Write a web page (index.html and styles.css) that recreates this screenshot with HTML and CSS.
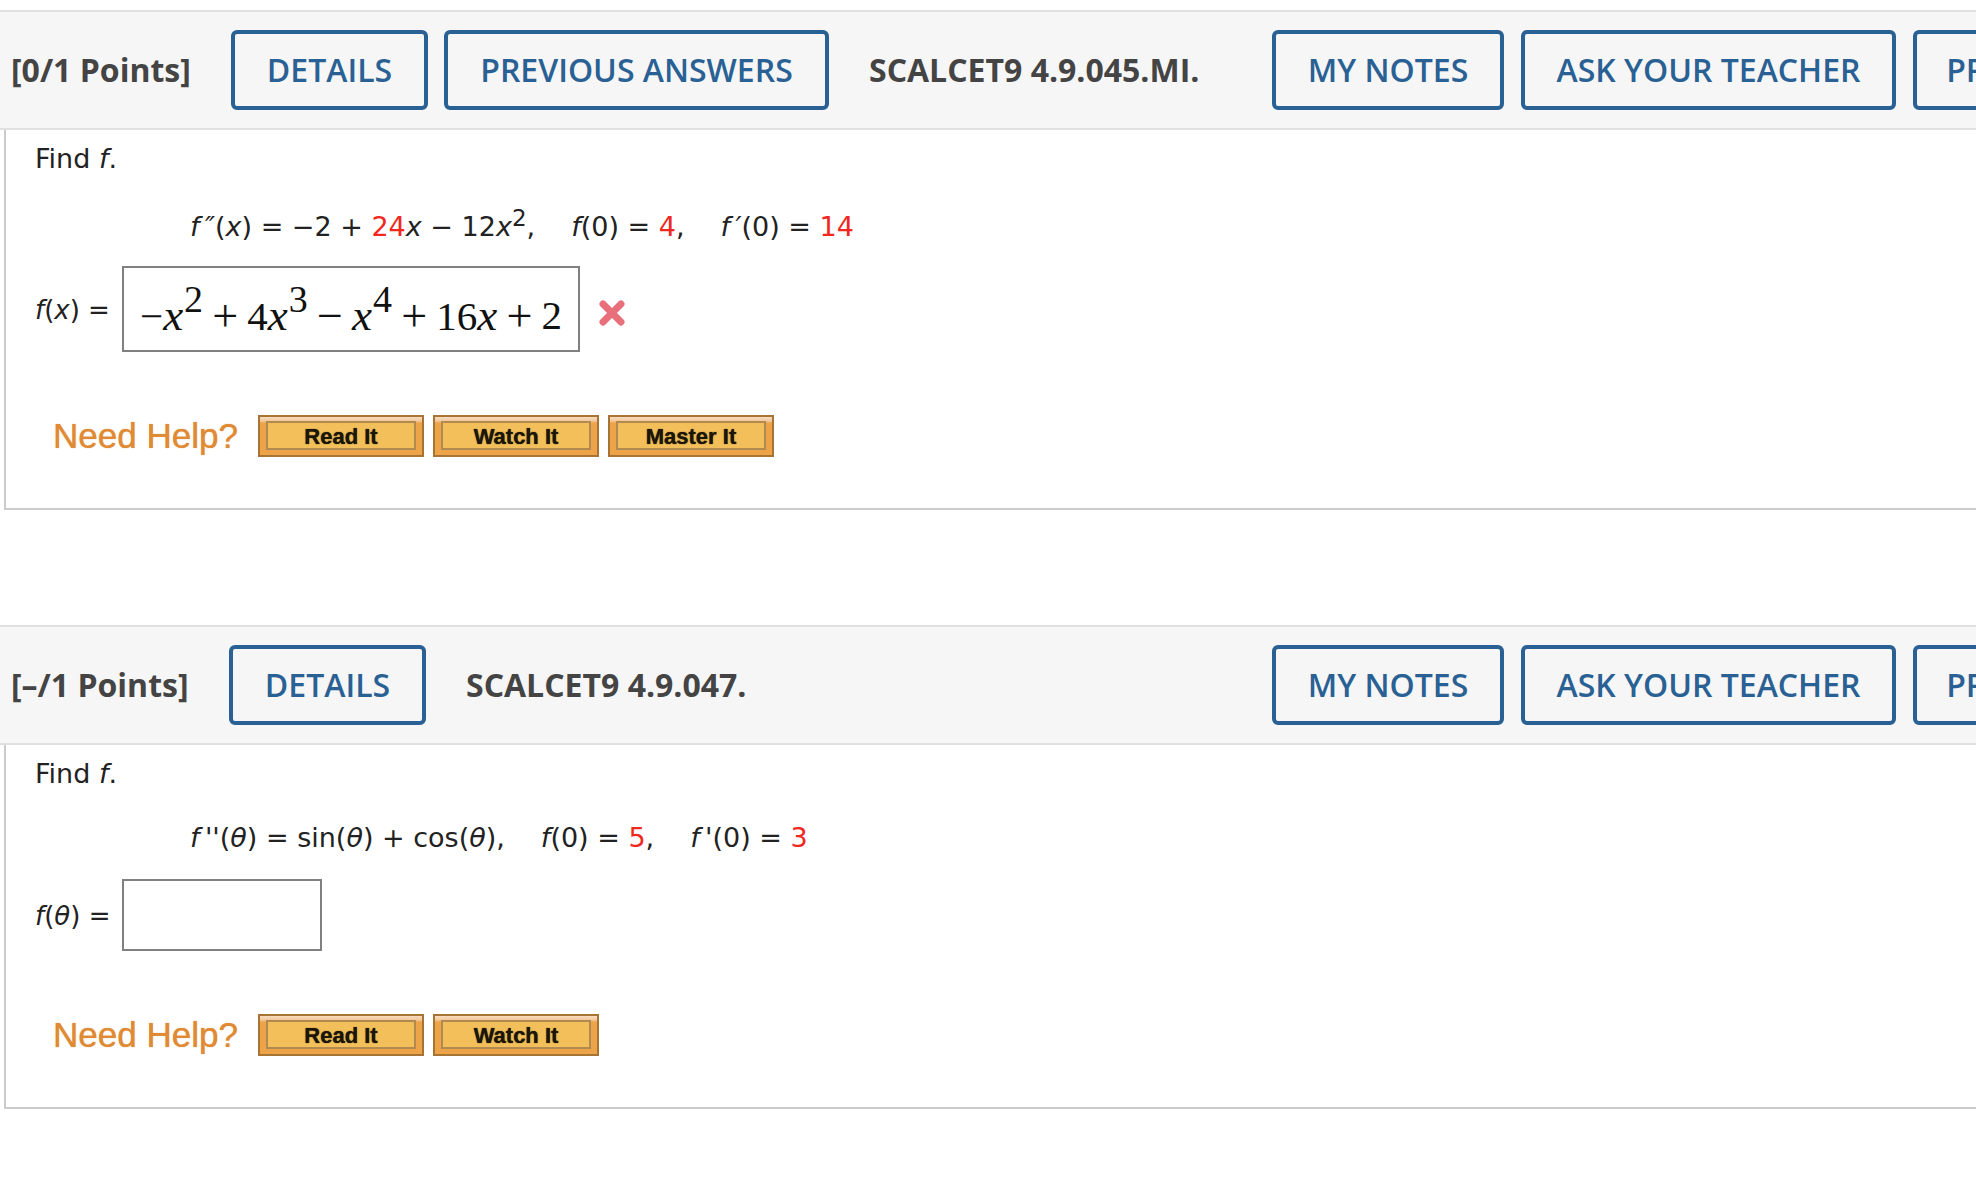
FILE: index.html
```html
<!DOCTYPE html>
<html lang="en">
<head>
    <meta charset="UTF-8">
    <meta name="viewport" content="width=device-width, initial-scale=1.0">
    <title>SCALCET9 4.9</title>
    <link rel="stylesheet" href="styles.css">
</head>
<body>
    <div class="question first">
        <div class="q-header">
            <div class="q-main">
                <span class="points">[0/1 Points]</span>
                <a class="btn btn-details">DETAILS</a>
                <a class="btn btn-prev">PREVIOUS ANSWERS</a>
                <span class="q-code code-a">SCALCET9 4.9.045.MI.</span>
            </div>
            <div class="q-actions">
                <a class="btn btn-notes">MY NOTES</a>
                <a class="btn btn-ask">ASK YOUR TEACHER</a>
                <a class="btn btn-practice">PRACTICE ANOTHER</a>
            </div>
        </div>
        <div class="q-body">
            <p class="find">Find <i>f</i>.</p>
            <p class="equation"><i>f&thinsp;&#8243;</i>(<i>x</i>) = &minus;2 + <span class="red">24</span><i>x</i> &minus; 12<i>x</i><sup>2</sup>,<span class="sep"></span><i>f</i>(0) = <span class="red">4</span>,<span class="sep"></span><i>f&thinsp;&#8242;</i>(0) = <span class="red">14</span></p>
            <div class="answer answer-a">
                <span class="answer-label"><i>f</i>(<i>x</i>) =</span>
                <div class="math-box">
                    <span>&minus;<i>x</i><sup>2</sup></span><span class="op">+</span><span>4<i>x</i><sup>3</sup></span><span class="op">&minus;</span><span><i>x</i><sup>4</sup></span><span class="op">+</span><span>16<i>x</i></span><span class="op">+</span><span>2</span>
                </div>
                <svg class="wrong" width="30" height="30" viewBox="0 0 30 30">
                    <path d="M6 6 L24 24 M24 6 L6 24" fill="none" stroke="#e8707a" stroke-width="7" stroke-linecap="round"/>
                </svg>
            </div>
            <div class="help">
                <span class="help-label">Need Help?</span>
                <a class="help-btn"><span>Read It</span></a>
                <a class="help-btn"><span>Watch It</span></a>
                <a class="help-btn"><span>Master It</span></a>
            </div>
        </div>
    </div>

    <div class="question second">
        <div class="q-header">
            <div class="q-main">
                <span class="points">[&ndash;/1 Points]</span>
                <a class="btn btn-details">DETAILS</a>
                <span class="q-code code-b">SCALCET9 4.9.047.</span>
            </div>
            <div class="q-actions">
                <a class="btn btn-notes">MY NOTES</a>
                <a class="btn btn-ask">ASK YOUR TEACHER</a>
                <a class="btn btn-practice">PRACTICE ANOTHER</a>
            </div>
        </div>
        <div class="q-body">
            <p class="find">Find <i>f</i>.</p>
            <p class="equation"><i>f&thinsp;''</i>(<i>&theta;</i>) = sin(<i>&theta;</i>) + cos(<i>&theta;</i>),<span class="sep"></span><i>f</i>(0) = <span class="red">5</span>,<span class="sep"></span><i>f&thinsp;'</i>(0) = <span class="red">3</span></p>
            <div class="answer answer-b">
                <span class="answer-label"><i>f</i>(<i>&theta;</i>) =</span>
                <div class="empty-box"></div>
            </div>
            <div class="help">
                <span class="help-label">Need Help?</span>
                <a class="help-btn"><span>Read It</span></a>
                <a class="help-btn"><span>Watch It</span></a>
            </div>
        </div>
    </div>
</body>
</html>
```

FILE: styles.css
```css
html, body {
    margin: 0;
    padding: 0;
    background: #fff;
    overflow: hidden;
}
body {
    width: 1976px;
    height: 1198px;
    padding-top: 10px;
    box-sizing: border-box;
    font-family: "DejaVu Sans", sans-serif;
    color: #222;
}
p {
    margin: 0;
}
.second {
    margin-top: 115px;
}
.q-header {
    display: flex;
    height: 116px;
    align-items: center;
    background-color: #f6f6f6;
    border-top: 2px solid #e0e0e0;
    border-bottom: 2px solid #e0e0e0;
    white-space: nowrap;
    font-family: "Open Sans", sans-serif;
    font-size: 32px;
}
.q-main {
    display: flex;
    flex: none;
    width: 1272px;
    align-items: center;
}
.q-actions {
    display: flex;
    flex: none;
    gap: 17px;
}
.points {
    width: 231px;
    padding-left: 11px;
    padding-bottom: 2px;
    box-sizing: border-box;
    font-weight: 700;
    color: #444;
}
.second .points {
    width: 229px;
}
.q-code {
    padding-bottom: 2px;
    font-weight: 700;
    color: #444;
}
.code-a {
    margin-left: 40px;
}
.code-b {
    margin-left: 40px;
}
.btn {
    display: flex;
    height: 80px;
    box-sizing: border-box;
    align-items: center;
    justify-content: center;
    padding-bottom: 2px;
    border: 4px solid #2a6194;
    border-radius: 6px;
    color: #2a6194;
    font-weight: 600;
}
.btn-details {
    width: 197px;
}
.btn-prev {
    width: 385px;
    margin-left: 16px;
}
.btn-notes {
    width: 232px;
}
.btn-ask {
    width: 375px;
}
.btn-practice {
    width: 374px;
}
.q-body {
    border-left: 2px solid #ccc;
    border-bottom: 2px solid #ccc;
    margin-left: 4px;
    padding-left: 29px;
}
.first .q-body {
    height: 378px;
}
.second .q-body {
    height: 362px;
}
.find {
    padding-top: 12px;
    font-size: 27px;
    line-height: 34px;
}
.equation {
    margin-top: 34px;
    padding-left: 155px;
    font-size: 27px;
    line-height: 34px;
}
.second .equation {
    margin-top: 30px;
}
.equation sup {
    font-size: 23px;
    line-height: 0;
}
.sep {
    display: inline-block;
    width: 36px;
}
.red {
    color: #f0281e;
}
.answer {
    display: flex;
    align-items: center;
}
.answer-a {
    margin-top: 22px;
    height: 86px;
}
.answer-b {
    margin-top: 24px;
    height: 72px;
}
.answer-label {
    width: 87px;
    padding-top: 2px;
    font-size: 26px;
}
.math-box {
    display: flex;
    width: 458px;
    height: 86px;
    box-sizing: border-box;
    align-items: center;
    justify-content: space-between;
    padding: 12px 16px 0;
    border: 2px solid #808080;
    font-family: "Liberation Serif", serif;
    font-size: 41px;
    color: #111;
}
.math-box i {
    font-size: 45px;
}
.math-box sup {
    margin-left: 1px;
    font-size: 38px;
    line-height: 0;
    vertical-align: 18px;
}
.math-box .op {
    font-size: 46px;
}
.empty-box {
    width: 200px;
    height: 72px;
    box-sizing: border-box;
    border: 2px solid #808080;
}
.wrong {
    margin-top: 8px;
    margin-left: 17px;
}
.help {
    display: flex;
    align-items: center;
    gap: 9px;
    margin-top: 63px;
    padding-left: 18px;
}
.help-label {
    width: 196px;
    font-family: "Liberation Sans", sans-serif;
    font-size: 35px;
    color: #e08a35;
    text-shadow: 0 0 1px #e08a35;
}
.help-btn {
    display: block;
    width: 166px;
    height: 42px;
    box-sizing: border-box;
    padding: 4px 6px 5px;
    background: linear-gradient(#f7dcc0 0, #f3c89a 4px, #eda348 6px);
    border: 2px solid #a87434;
}
.help-btn span {
    display: block;
    height: 100%;
    box-sizing: border-box;
    border: 2px solid #b08a50;
    background-color: #f2bf5a;
    text-align: center;
    font-family: "Liberation Sans", sans-serif;
    font-size: 22px;
    font-weight: bold;
    line-height: 28px;
    color: #1c1608;
    text-shadow: 0 0 1px #1c1608;
}
```
